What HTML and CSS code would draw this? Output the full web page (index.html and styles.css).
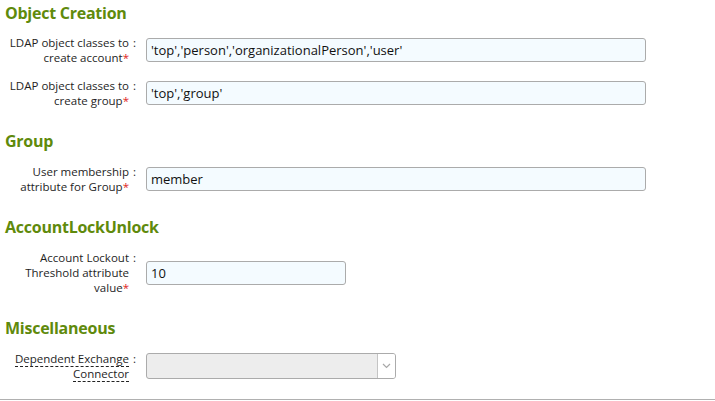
FILE: index.html
```html
<!DOCTYPE html>
<html>
<head>
<meta charset="utf-8">
<link rel="stylesheet" href="styles.css">
</head>
<body>
<div class="form">
  <h2 class="section first">Object Creation</h2>
  <div class="row">
    <div class="lbl"><span class="txt">LDAP object classes to<br>create account<span class="req">*</span></span><span class="colon">:</span></div>
    <div class="field wide">'top','person','organizationalPerson','user'</div>
  </div>
  <div class="row">
    <div class="lbl"><span class="txt">LDAP object classes to<br>create group<span class="req">*</span></span><span class="colon">:</span></div>
    <div class="field wide">'top','group'</div>
  </div>

  <h2 class="section">Group</h2>
  <div class="row">
    <div class="lbl"><span class="txt">User membership<br>attribute for Group<span class="req">*</span></span><span class="colon">:</span></div>
    <div class="field wide">member</div>
  </div>

  <h2 class="section">AccountLockUnlock</h2>
  <div class="row">
    <div class="lbl"><span class="txt">Account Lockout<br>Threshold attribute<br>value<span class="req">*</span></span><span class="colon">:</span></div>
    <div class="field short">10</div>
  </div>

  <h2 class="section">Miscellaneous</h2>
  <div class="row">
    <div class="lbl"><span class="txt"><span class="tip">Dependent Exchange</span><br><span class="tip">Connector</span></span><span class="colon">:</span></div>
    <div class="select">
      <div class="sel-val"></div>
      <div class="sel-arrow">
        <svg width="9" height="6" viewBox="0 0 9 6"><path d="M1 1 L4.5 4.5 L8 1" fill="none" stroke="#a8a8a8" stroke-width="1.2"/></svg>
      </div>
    </div>
  </div>
</div>
<div class="bottom-line"></div>
</body>
</html>
```
FILE: styles.css
```css
html, body {
  margin: 0;
  padding: 0;
  background: #ffffff;
}
body {
  font-family: "Open Sans", "Noto Sans", sans-serif;
  color: #1e1e1e;
  width: 715px;
  height: 401px;
  overflow: hidden;
  display: flex;
  flex-direction: column;
}
.form {
  height: 399px;
  flex: none;
}
.section {
  margin: 22px 0 12px;
  padding-left: 5px;
  font-size: 16px;
  line-height: 22px;
  letter-spacing: -0.25px;
  font-weight: 700;
  color: #5f8a0c;
}
.section.first {
  margin-top: 2px;
  margin-bottom: 11px;
}
.row {
  display: flex;
  align-items: center;
}
.row + .row {
  margin-top: 13px;
}
.lbl {
  width: 146px;
  display: flex;
  align-items: flex-start;
  font-size: 11.5px;
  line-height: 15px;
}
.txt {
  width: 129px;
  text-align: right;
}
.colon {
  width: 17px;
  padding-left: 4px;
  box-sizing: border-box;
}
.req {
  color: #e0241c;
}
.tip {
  border-bottom: 1px dashed #222;
}
.field {
  box-sizing: border-box;
  height: 24px;
  border: 1px solid #ababab;
  border-radius: 3px;
  background: #f4fbff;
  font-size: 13px;
  line-height: 22px;
  padding-left: 4px;
  color: #111;
  white-space: nowrap;
}
.wide {
  width: 500px;
}
.short {
  width: 200px;
}
.select {
  box-sizing: border-box;
  width: 250px;
  height: 26px;
  border: 1px solid #ababab;
  border-radius: 3px;
  background: #ededed;
  display: flex;
  overflow: hidden;
}
.sel-val {
  flex: 1;
}
.sel-arrow {
  width: 17px;
  border-left: 1px solid #c4c4c4;
  background: #ffffff;
  display: flex;
  align-items: center;
  justify-content: center;
}
.bottom-line {
  height: 1px;
  background: #b0b0b0;
  flex: none;
}
```
